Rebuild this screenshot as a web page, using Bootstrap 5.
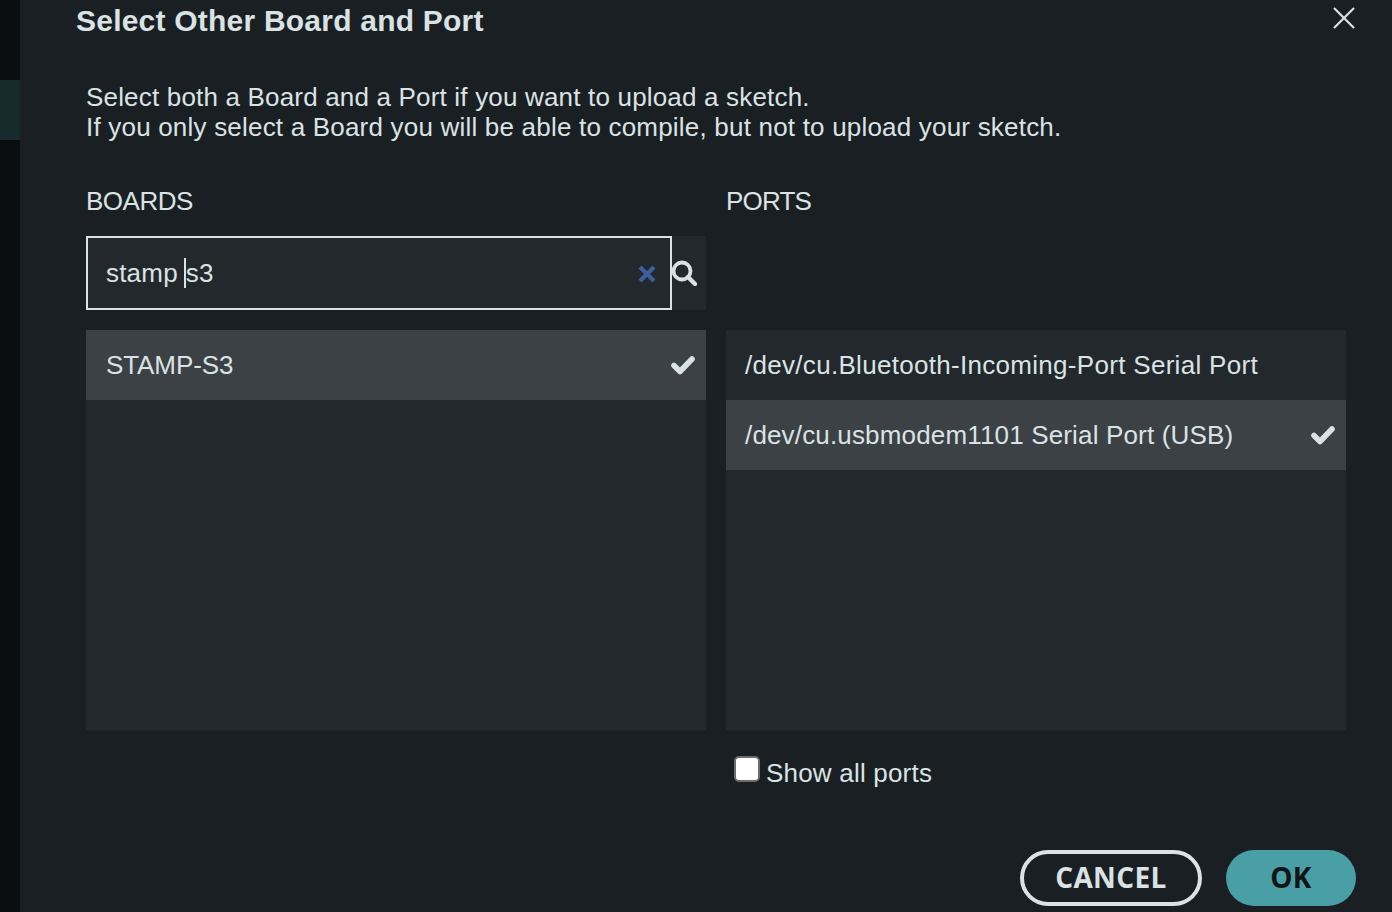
<!DOCTYPE html>
<html lang="en">
<head>
<meta charset="utf-8">
<title>Select Other Board and Port</title>
<link href="https://cdn.jsdelivr.net/npm/bootstrap@5.3.0/dist/css/bootstrap.min.css" rel="stylesheet">
<style>
html,body{height:100%;margin:0;overflow:hidden;background:#1a1f23;}
body{font-family:"Liberation Sans",Arial,sans-serif;color:#dae3e3;font-size:26px;line-height:30px;}
.app-shell{width:1392px;height:912px;overflow:hidden;}
.side-strip{width:20px;background:#0a0e0f;padding-top:80px;flex:none;}
.side-active{height:60px;background:#172b2d;}
.dlg{width:1372px;height:912px;background:#1a1f23;padding:0 36px 0 56px;}
.dlg-head{height:44px;}
.dlg-title{font-size:30px;line-height:42px;font-weight:700;color:#dae3e3;margin:0;letter-spacing:.22px;}
.dlg-close{width:30px;height:30px;padding:0;border:0;background:none;margin-top:3px;margin-right:-3px;line-height:0;}
.dlg-body{padding:38px 10px 0 10px;}
.intro{margin:0 0 44px;}
.intro-a{letter-spacing:.18px;}
.intro-b{letter-spacing:.2px;}
.picker-row{gap:20px;width:1260px;}
.picker-col{width:620px;flex:none;}
.col-label{height:30px;margin-bottom:20px;}
.lbl-boards{letter-spacing:-.5px;}
.lbl-ports{letter-spacing:-.8px;}
.search-wrap{height:74px;margin-bottom:20px;background:#22282c;}
.search-box{width:586px;height:74px;border:2px solid #dae3e3;background:#22282c;padding:0 12px 0 18px;}
.search-text{letter-spacing:.2px;}
.clear-icon{margin-top:2px;}
.caret-mark{display:inline-block;width:2px;height:30px;background:#dae3e3;vertical-align:-6px;margin:0 0 0 6px;}
.search-btn{width:34px;height:74px;line-height:0;margin-left:-1px;}
.search-spacer{height:74px;margin-bottom:20px;}
.item-list{height:400px;background:#22282c;border-radius:0;display:block;}
.item-row{height:70px;background:transparent;color:#dae3e3;border:0;border-radius:0!important;padding:0 11px 0 20px;font-size:26px;line-height:30px;}
.item-row.picked{background:#3b4145;color:#dae3e3;}
.ls-stamp{letter-spacing:-.1px;}
.ls-bt{letter-spacing:.3px;margin-left:-1px;}
.ls-usb{letter-spacing:.16px;margin-left:-1px;}
.all-ports{margin:27px 0 0 8px;gap:6px;height:32px;padding:0;min-height:0;}
.all-ports .form-check-input{width:26px;height:26px;margin:0;float:none;background-color:#fff;border:2px solid #6d6d6d;border-radius:5px;flex:none;position:relative;top:-4px;}
.all-ports label{font-size:26px;line-height:30px;letter-spacing:.2px;}
.dlg-foot{gap:24px;width:1270px;margin-top:61px;}
.pill{height:56px;border-radius:28px;font-family:"Open Sans",sans-serif;font-weight:700;font-size:28px;line-height:1;letter-spacing:.4px;padding:0 0 2px;}
.pill-cancel{width:182px;background:transparent;border:4px solid #dae3e3;color:#dae3e3;}
.pill-ok{width:130px;background:#4a9fa6;border:0;color:#101417;}
</style>
</head>
<body>
<div class="app-shell d-flex">
  <div class="side-strip"><div class="side-active"></div></div>
  <div class="dlg">
    <div class="dlg-head d-flex justify-content-between align-items-start">
      <h5 class="dlg-title">Select Other Board and Port</h5>
      <button class="dlg-close" type="button" aria-label="Close">
        <svg width="30" height="30" viewBox="0 0 30 30"><path d="M5 5 25 25M25 5 5 25" stroke="#dae3e3" stroke-width="2.2" fill="none"/></svg>
      </button>
    </div>
    <div class="dlg-body">
      <p class="intro"><span class="intro-a">Select both a Board and a Port if you want to upload a sketch.</span><br><span class="intro-b">If you only select a Board you will be able to compile, but not to upload your sketch.</span></p>
      <div class="picker-row d-flex">
        <div class="picker-col">
          <div class="col-label lbl-boards">BOARDS</div>
          <div class="search-wrap d-flex">
            <div class="search-box d-flex align-items-center justify-content-between">
              <span class="search-text">stamp<span class="caret-mark"></span>s3</span>
              <svg class="clear-icon" width="22" height="22" viewBox="0 0 22 22"><path d="M4 4 18 18M18 4 4 18" stroke="#3f5e9e" stroke-width="4.200" fill="none"/></svg>
            </div>
            <div class="search-btn d-flex align-items-center">
              <svg width="26" height="26" viewBox="0 0 26 26"><circle cx="11" cy="11" r="8.500" stroke="#dae3e3" stroke-width="3.800" fill="none"/><path d="M17 17 24 24" stroke="#dae3e3" stroke-width="4.400" stroke-linecap="round"/></svg>
            </div>
          </div>
          <div class="item-list list-group">
            <div class="item-row picked list-group-item d-flex align-items-center justify-content-between"><span class="ls-stamp">STAMP-S3</span>
              <svg width="24" height="20" viewBox="0 0 24 20"><path d="M3 10.500 9 16.500 21 4" stroke="#dae3e3" stroke-width="5.600" fill="none" stroke-linejoin="round" stroke-linecap="round"/></svg>
            </div>
          </div>
        </div>
        <div class="picker-col">
          <div class="col-label lbl-ports">PORTS</div>
          <div class="search-spacer"></div>
          <div class="item-list list-group">
            <div class="item-row list-group-item d-flex align-items-center"><span class="ls-bt">/dev/cu.Bluetooth-Incoming-Port Serial Port</span></div>
            <div class="item-row picked list-group-item d-flex align-items-center justify-content-between"><span class="ls-usb">/dev/cu.usbmodem1101 Serial Port (USB)</span>
              <svg width="24" height="20" viewBox="0 0 24 20"><path d="M3 10.500 9 16.500 21 4" stroke="#dae3e3" stroke-width="5.600" fill="none" stroke-linejoin="round" stroke-linecap="round"/></svg>
            </div>
          </div>
          <div class="all-ports form-check d-flex align-items-center">
            <input class="form-check-input" type="checkbox" id="allPorts">
            <label class="form-check-label" for="allPorts">Show all ports</label>
          </div>
        </div>
      </div>
      <div class="dlg-foot d-flex justify-content-end">
        <button class="btn pill pill-cancel" type="button">CANCEL</button>
        <button class="btn pill pill-ok" type="button">OK</button>
      </div>
    </div>
  </div>
</div>
<script src="https://cdn.jsdelivr.net/npm/bootstrap@5.3.0/dist/js/bootstrap.bundle.min.js"></script>
</body>
</html>
